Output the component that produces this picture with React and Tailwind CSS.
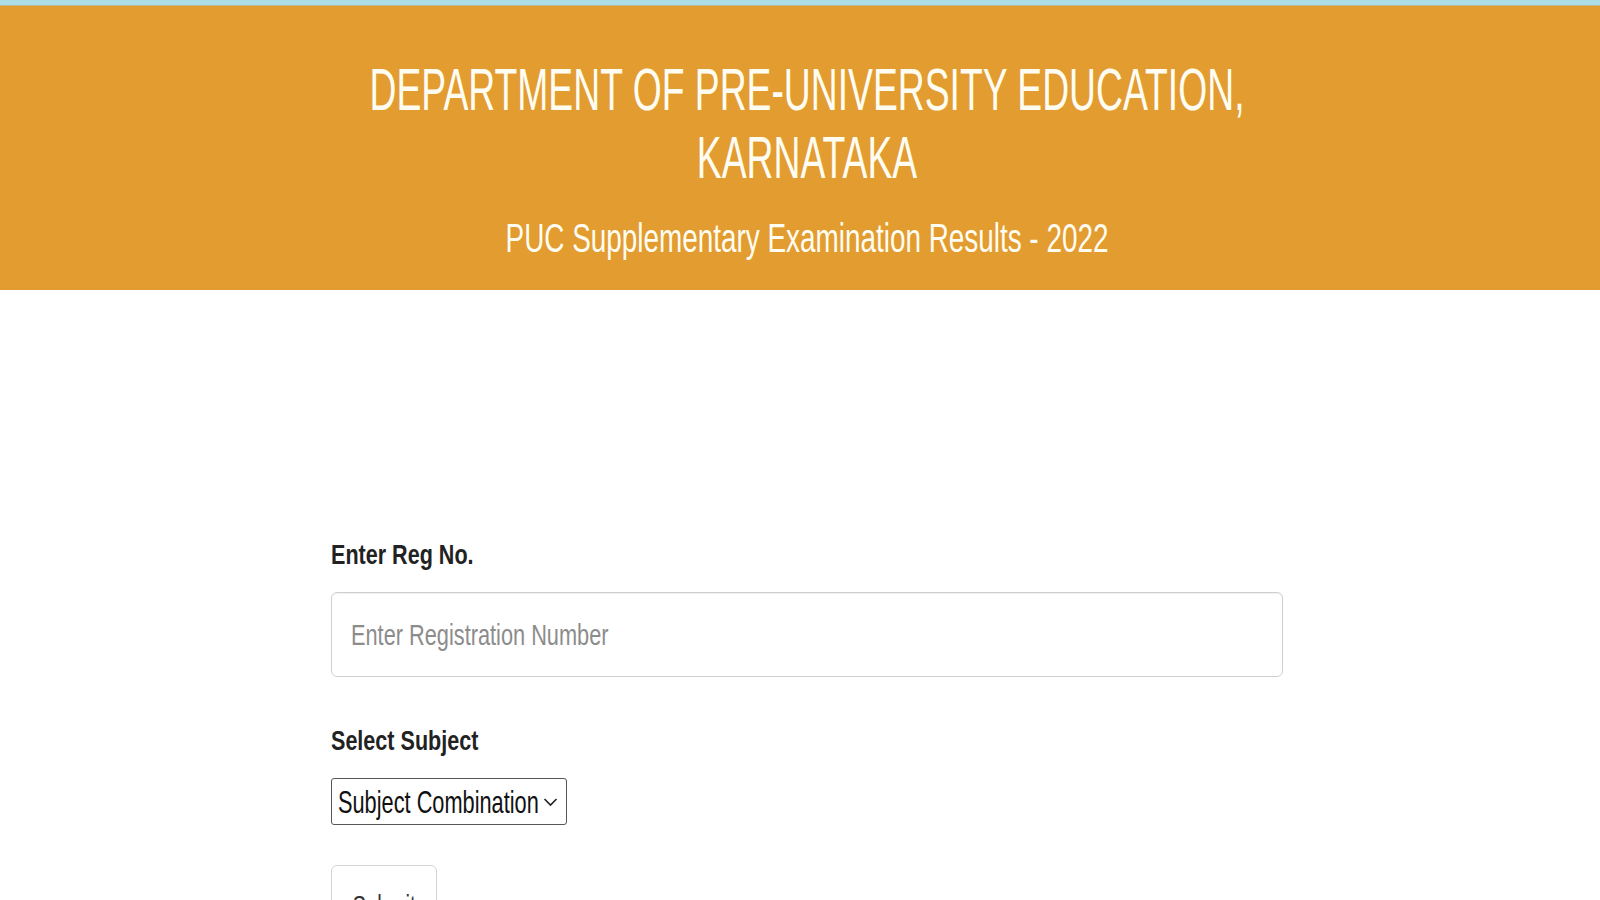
export default function App() {
  const font = { fontFamily: '"Liberation Sans", Arial, sans-serif' };
  return (
    <div className="h-[900px] w-full overflow-hidden bg-white" style={font}>
      <div className="h-[5px] bg-[#acdce6]" />
      <div className="h-[1px] bg-[#b9b99a]" />
      <header className="bg-[#e29c30] pl-[14px] pt-[50px] pb-[28px] text-[#fffdf2]">
        <h1 className="origin-center scale-x-[0.632] text-center text-[59px] font-normal leading-[68px]">
          <div>DEPARTMENT OF PRE-UNIVERSITY EDUCATION,</div>
          <div>KARNATAKA</div>
        </h1>
        <h2 className="mt-[22px] origin-center scale-x-[0.697] text-center text-[40px] font-normal leading-[48px]">
          PUC Supplementary Examination Results - 2022
        </h2>
      </header>
      <main className="pl-[14px]">
        <div className="mx-auto w-[952px] pt-[249px]">
          <label className="block origin-left scale-x-[0.77] text-[28px] font-bold leading-[32px] text-[#222]">
            Enter Reg No.
          </label>
          <div className="mt-[21px] flex h-[85px] items-center rounded-[6px] border-[1.5px] border-[#cfcfcf] pt-[2px] pl-[19px] shadow-[inset_0_1px_1px_rgba(0,0,0,0.06)]">
            <span className="block origin-left scale-x-[0.75] text-[29px] leading-[29px] text-[#8c8c8c]">
              Enter Registration Number
            </span>
          </div>
          <label className="mt-[48px] block origin-left scale-x-[0.77] text-[28px] font-bold leading-[32px] text-[#222]">
            Select Subject
          </label>
          <div className="mt-[21px] flex h-[47px] w-[236px] items-center rounded-[3px] border border-[#555] pl-[6px] pr-[8px]">
            <span className="block min-w-0 flex-1 origin-left scale-x-[0.68] whitespace-nowrap text-[32px] leading-[32px] text-[#111]">
              Subject Combination
            </span>
            <svg width="15" height="10" viewBox="0 0 15 10" className="shrink-0">
              <polyline points="1.5,2 7.5,8 13.5,2" fill="none" stroke="#222" strokeWidth="1.6" />
            </svg>
          </div>
          <button className="mt-[40px] flex h-[82px] w-[106px] justify-center overflow-visible rounded-[6px] border-[1.5px] border-[#d4d4d4] bg-white pt-[24px]">
            <span className="block origin-center scale-x-[0.7] whitespace-nowrap text-[29px] leading-[32px] text-[#333]">
              Submit
            </span>
          </button>
        </div>
      </main>
    </div>
  );
}
